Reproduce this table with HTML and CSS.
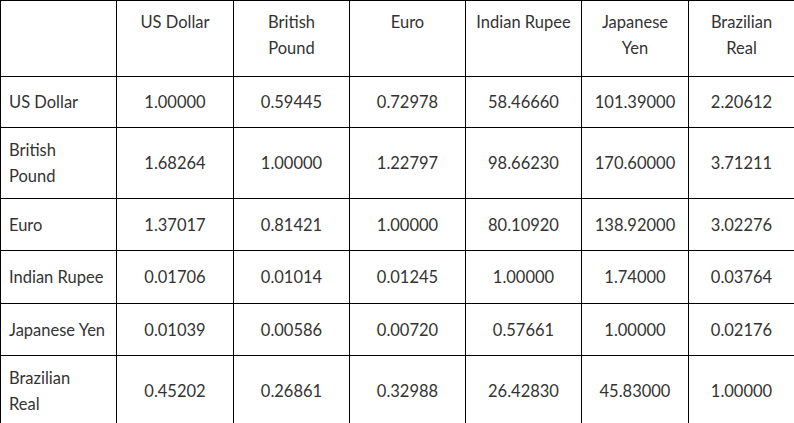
FILE: index.html
```html
<!DOCTYPE html>
<html lang="en">
<head>
<meta charset="utf-8">
<title>Currency Exchange Rates</title>
<link rel="stylesheet" href="styles.css">
</head>
<body>
<table class="rates">
  <colgroup>
    <col class="c0"><col class="c1"><col class="c2"><col class="c3"><col class="c4"><col class="c5"><col class="c6">
  </colgroup>
  <thead>
    <tr class="r-head">
      <th></th>
      <th>US Dollar</th>
      <th>British<br>Pound</th>
      <th>Euro</th>
      <th>Indian Rupee</th>
      <th>Japanese<br>Yen</th>
      <th>Brazilian<br>Real</th>
    </tr>
  </thead>
  <tbody>
    <tr class="r1">
      <th>US Dollar</th>
      <td>1.00000</td><td>0.59445</td><td>0.72978</td><td>58.46660</td><td>101.39000</td><td>2.20612</td>
    </tr>
    <tr class="r2">
      <th>British<br>Pound</th>
      <td>1.68264</td><td>1.00000</td><td>1.22797</td><td>98.66230</td><td>170.60000</td><td>3.71211</td>
    </tr>
    <tr class="r3">
      <th>Euro</th>
      <td>1.37017</td><td>0.81421</td><td>1.00000</td><td>80.10920</td><td>138.92000</td><td>3.02276</td>
    </tr>
    <tr class="r4">
      <th>Indian Rupee</th>
      <td>0.01706</td><td>0.01014</td><td>0.01245</td><td>1.00000</td><td>1.74000</td><td>0.03764</td>
    </tr>
    <tr class="r5">
      <th>Japanese Yen</th>
      <td>0.01039</td><td>0.00586</td><td>0.00720</td><td>0.57661</td><td>1.00000</td><td>0.02176</td>
    </tr>
    <tr class="r6">
      <th>Brazilian<br>Real</th>
      <td>0.45202</td><td>0.26861</td><td>0.32988</td><td>26.42830</td><td>45.83000</td><td>1.00000</td>
    </tr>
  </tbody>
</table>
</body>
</html>
```
FILE: styles.css
```css
html, body {
  margin: 0;
  padding: 0;
  background: #ffffff;
}

.rates {
  border-collapse: collapse;
  table-layout: fixed;
  width: 794px;
  font-family: Lato, "Open Sans", sans-serif;
  font-size: 16.5px;
  line-height: 26px;
  color: #333333;
}

.c0 { width: 116px; }
.c1 { width: 117px; }
.c2 { width: 116px; }
.c3 { width: 116px; }
.c4 { width: 116px; }
.c5 { width: 107px; }
.c6 { width: 106px; }

.rates th,
.rates td {
  border: 1px solid #000000;
  padding: 0 6px;
  font-weight: normal;
  text-align: center;
  vertical-align: middle;
}

.rates thead th {
  vertical-align: top;
  padding-top: 8px;
}

.rates tbody th {
  text-align: left;
  padding-left: 8px;
}

.r-head { height: 76px; }
.r1 { height: 51px; }
.r2 { height: 71px; }
.r3 { height: 52px; }
.r4 { height: 53px; }
.r5 { height: 52px; }
.r6 { height: 70px; }
```
